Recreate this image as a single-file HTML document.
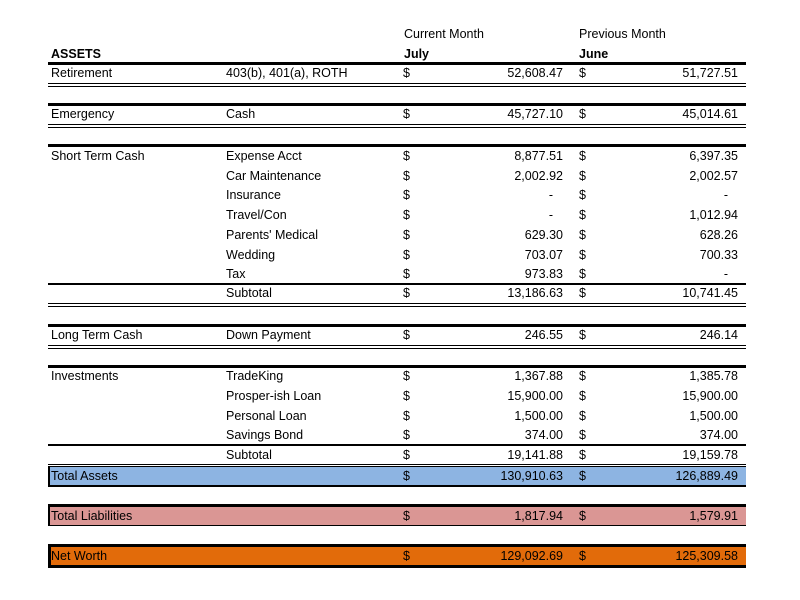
<!DOCTYPE html>
<html><head><meta charset="utf-8"><style>
body{margin:0;width:800px;height:600px;background:#fff;position:relative;overflow:hidden;font-family:"Liberation Sans",sans-serif;font-size:12.5px;color:#000}
.t{position:absolute;line-height:16px;white-space:nowrap}
.r{position:absolute;line-height:16px;white-space:nowrap;text-align:right}
.b{font-weight:bold}
.l{position:absolute;left:48px;width:698px;background:#000}
.bx{position:absolute;left:48px;width:698px}
</style></head><body>
<div class="t" style="left:404px;top:26px">Current Month</div>
<div class="t" style="left:579px;top:26px">Previous Month</div>
<div class="t b" style="left:51px;top:46px">ASSETS</div>
<div class="t b" style="left:404px;top:46px">July</div>
<div class="t b" style="left:579px;top:46px">June</div>

<div class="bx" style="top:467px;height:19px;background:#8db4e2;border-left:2px solid #000;box-sizing:border-box"></div>
<div class="bx" style="top:506px;height:20px;background:#da9694;border-left:2px solid #000;box-sizing:border-box"></div>
<div class="bx" style="top:544px;height:24px;background:#e26b0a;border-top:3px solid #000;border-bottom:3px solid #000;border-left:3px solid #000;box-sizing:border-box"></div>

<div class="l" style="top:62px;height:3px"></div>
<div class="l" style="top:83px;height:1px"></div><div class="l" style="top:86px;height:1px"></div>
<div class="l" style="top:103px;height:3px"></div>
<div class="l" style="top:124px;height:1px"></div><div class="l" style="top:127px;height:1px"></div>
<div class="l" style="top:144px;height:3px"></div>
<div class="l" style="top:283px;height:2px"></div>
<div class="l" style="top:303px;height:1px"></div><div class="l" style="top:306px;height:1px"></div>
<div class="l" style="top:324px;height:3px"></div>
<div class="l" style="top:345px;height:1px"></div><div class="l" style="top:348px;height:1px"></div>
<div class="l" style="top:365px;height:3px"></div>
<div class="l" style="top:444px;height:2px"></div>
<div class="l" style="top:464px;height:1px"></div><div class="l" style="top:466px;height:1px"></div>
<div class="l" style="top:485px;height:2px"></div>
<div class="l" style="top:504px;height:3px"></div>
<div class="l" style="top:525px;height:1px"></div>

<div class="t" style="left:51px;top:65px">Retirement</div><div class="t" style="left:226px;top:65px">403(b), 401(a), ROTH</div>
<div class="t" style="left:51px;top:106px">Emergency</div><div class="t" style="left:226px;top:106px">Cash</div>
<div class="t" style="left:51px;top:148px">Short Term Cash</div>
<div class="t" style="left:226px;top:148px">Expense Acct</div>
<div class="t" style="left:226px;top:168px">Car Maintenance</div>
<div class="t" style="left:226px;top:187px">Insurance</div>
<div class="t" style="left:226px;top:207px">Travel/Con</div>
<div class="t" style="left:226px;top:227px">Parents' Medical</div>
<div class="t" style="left:226px;top:247px">Wedding</div>
<div class="t" style="left:226px;top:266px">Tax</div>
<div class="t" style="left:226px;top:285px">Subtotal</div>
<div class="t" style="left:51px;top:327px">Long Term Cash</div><div class="t" style="left:226px;top:327px">Down Payment</div>
<div class="t" style="left:51px;top:368px">Investments</div>
<div class="t" style="left:226px;top:368px">TradeKing</div>
<div class="t" style="left:226px;top:388px">Prosper-ish Loan</div>
<div class="t" style="left:226px;top:408px">Personal Loan</div>
<div class="t" style="left:226px;top:427px">Savings Bond</div>
<div class="t" style="left:226px;top:447px">Subtotal</div>
<div class="t" style="left:51px;top:468px">Total Assets</div>
<div class="t" style="left:51px;top:508px">Total Liabilities</div>
<div class="t" style="left:51px;top:548px">Net Worth</div>

<div class="t" style="left:403px;top:65px">$</div><div class="r" style="right:237px;top:65px">52,608.47</div><div class="t" style="left:579px;top:65px">$</div><div class="r" style="right:62px;top:65px">51,727.51</div>
<div class="t" style="left:403px;top:106px">$</div><div class="r" style="right:237px;top:106px">45,727.10</div><div class="t" style="left:579px;top:106px">$</div><div class="r" style="right:62px;top:106px">45,014.61</div>
<div class="t" style="left:403px;top:148px">$</div><div class="r" style="right:237px;top:148px">8,877.51</div><div class="t" style="left:579px;top:148px">$</div><div class="r" style="right:62px;top:148px">6,397.35</div>
<div class="t" style="left:403px;top:168px">$</div><div class="r" style="right:237px;top:168px">2,002.92</div><div class="t" style="left:579px;top:168px">$</div><div class="r" style="right:62px;top:168px">2,002.57</div>
<div class="t" style="left:403px;top:187px">$</div><div class="r" style="right:247px;top:187px">-</div><div class="t" style="left:579px;top:187px">$</div><div class="r" style="right:72px;top:187px">-</div>
<div class="t" style="left:403px;top:207px">$</div><div class="r" style="right:247px;top:207px">-</div><div class="t" style="left:579px;top:207px">$</div><div class="r" style="right:62px;top:207px">1,012.94</div>
<div class="t" style="left:403px;top:227px">$</div><div class="r" style="right:237px;top:227px">629.30</div><div class="t" style="left:579px;top:227px">$</div><div class="r" style="right:62px;top:227px">628.26</div>
<div class="t" style="left:403px;top:247px">$</div><div class="r" style="right:237px;top:247px">703.07</div><div class="t" style="left:579px;top:247px">$</div><div class="r" style="right:62px;top:247px">700.33</div>
<div class="t" style="left:403px;top:266px">$</div><div class="r" style="right:237px;top:266px">973.83</div><div class="t" style="left:579px;top:266px">$</div><div class="r" style="right:72px;top:266px">-</div>
<div class="t" style="left:403px;top:285px">$</div><div class="r" style="right:237px;top:285px">13,186.63</div><div class="t" style="left:579px;top:285px">$</div><div class="r" style="right:62px;top:285px">10,741.45</div>
<div class="t" style="left:403px;top:327px">$</div><div class="r" style="right:237px;top:327px">246.55</div><div class="t" style="left:579px;top:327px">$</div><div class="r" style="right:62px;top:327px">246.14</div>
<div class="t" style="left:403px;top:368px">$</div><div class="r" style="right:237px;top:368px">1,367.88</div><div class="t" style="left:579px;top:368px">$</div><div class="r" style="right:62px;top:368px">1,385.78</div>
<div class="t" style="left:403px;top:388px">$</div><div class="r" style="right:237px;top:388px">15,900.00</div><div class="t" style="left:579px;top:388px">$</div><div class="r" style="right:62px;top:388px">15,900.00</div>
<div class="t" style="left:403px;top:408px">$</div><div class="r" style="right:237px;top:408px">1,500.00</div><div class="t" style="left:579px;top:408px">$</div><div class="r" style="right:62px;top:408px">1,500.00</div>
<div class="t" style="left:403px;top:427px">$</div><div class="r" style="right:237px;top:427px">374.00</div><div class="t" style="left:579px;top:427px">$</div><div class="r" style="right:62px;top:427px">374.00</div>
<div class="t" style="left:403px;top:447px">$</div><div class="r" style="right:237px;top:447px">19,141.88</div><div class="t" style="left:579px;top:447px">$</div><div class="r" style="right:62px;top:447px">19,159.78</div>
<div class="t" style="left:403px;top:468px">$</div><div class="r" style="right:237px;top:468px">130,910.63</div><div class="t" style="left:579px;top:468px">$</div><div class="r" style="right:62px;top:468px">126,889.49</div>
<div class="t" style="left:403px;top:508px">$</div><div class="r" style="right:237px;top:508px">1,817.94</div><div class="t" style="left:579px;top:508px">$</div><div class="r" style="right:62px;top:508px">1,579.91</div>
<div class="t" style="left:403px;top:548px">$</div><div class="r" style="right:237px;top:548px">129,092.69</div><div class="t" style="left:579px;top:548px">$</div><div class="r" style="right:62px;top:548px">125,309.58</div>
</body></html>
